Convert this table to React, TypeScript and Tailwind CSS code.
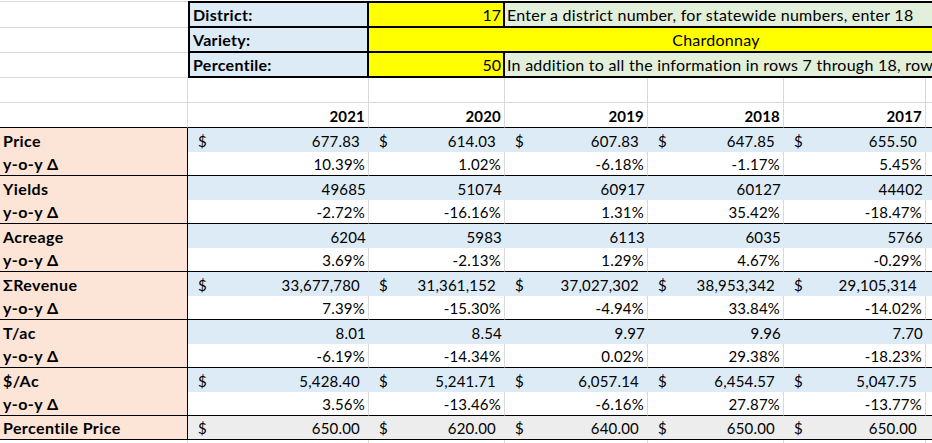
import React from "react";

const W = ["w-[181px]", "w-[136px]", "w-[143px]", "w-[136px]", "w-[142px]"];

const years = ["2021", "2020", "2019", "2018", "2017"];

type Row = { label: string; kind: "blue" | "white" | "gray"; cells: string[]; dollar?: boolean; end?: boolean };

const rows: Row[] = [
  { label: "Price", kind: "blue", dollar: true, cells: ["677.83", "614.03", "607.83", "647.85", "655.50"] },
  { label: "y-o-y Δ", kind: "white", end: true, cells: ["10.39%", "1.02%", "-6.18%", "-1.17%", "5.45%"] },
  { label: "Yields", kind: "blue", cells: ["49685", "51074", "60917", "60127", "44402"] },
  { label: "y-o-y Δ", kind: "white", end: true, cells: ["-2.72%", "-16.16%", "1.31%", "35.42%", "-18.47%"] },
  { label: "Acreage", kind: "blue", cells: ["6204", "5983", "6113", "6035", "5766"] },
  { label: "y-o-y Δ", kind: "white", end: true, cells: ["3.69%", "-2.13%", "1.29%", "4.67%", "-0.29%"] },
  { label: "ΣRevenue", kind: "blue", dollar: true, cells: ["33,677,780", "31,361,152", "37,027,302", "38,953,342", "29,105,314"] },
  { label: "y-o-y Δ", kind: "white", end: true, cells: ["7.39%", "-15.30%", "-4.94%", "33.84%", "-14.02%"] },
  { label: "T/ac", kind: "blue", cells: ["8.01", "8.54", "9.97", "9.96", "7.70"] },
  { label: "y-o-y Δ", kind: "white", end: true, cells: ["-6.19%", "-14.34%", "0.02%", "29.38%", "-18.23%"] },
  { label: "$/Ac", kind: "blue", dollar: true, cells: ["5,428.40", "5,241.71", "6,057.14", "6,454.57", "5,047.75"] },
  { label: "y-o-y Δ", kind: "white", end: true, cells: ["3.56%", "-13.46%", "-6.16%", "27.87%", "-13.77%"] },
  { label: "Percentile Price", kind: "gray", dollar: true, end: true, cells: ["650.00", "620.00", "640.00", "650.00", "650.00"] },
];

function DataRow({ r }: { r: Row }) {
  const fill =
    r.kind === "blue" ? "bg-[#DDEBF7]" : r.kind === "gray" ? "bg-[#EDEDED]" : "bg-white";
  const bottom = r.end ? "border-b border-b-black" : "";
  return (
    <div className="flex h-[24px]">
      <div className={`w-[188px] shrink-0 bg-[#FCE4D6] border-r border-r-black ${bottom} flex items-end pl-[3px] pb-[2px] font-bold text-[16px] tracking-[0.4px]`}>
        {r.label}
      </div>
      {r.cells.map((c, i) => (
        <div
          key={i}
          className={`${W[i]} shrink-0 ${fill} ${bottom} ${r.kind === "white" ? "border-r border-r-[#D9D9D9]" : ""} flex items-end justify-between pb-[2px]`}
        >
          {r.dollar ? (
            <>
              <span className="pl-[10px]">$</span>
              <span className="pr-[9px] tracking-[0.2px]">{c}</span>
            </>
          ) : (
            <>
              <span />
              <span className="pr-[3px] tracking-[0.2px]">{c}</span>
            </>
          )}
        </div>
      ))}
      <div className={`flex-1 ${fill} ${bottom}`} />
    </div>
  );
}

export default function App() {
  return (
    <div className="w-[932px] h-[443px] overflow-hidden bg-white text-black text-[15px] leading-[18px] font-['Lato','Noto_Sans',sans-serif]">
      <div className="h-px" />
      {/* Row 1 */}
      <div className="flex h-[27px]">
        <div className="w-[188px] shrink-0 border-t border-b border-[#D9D9D9]" />
        <div className="w-[181px] shrink-0 bg-[#DDEBF7] border-l-2 border-r-2 border-t-2 border-b-2 border-black flex items-end pl-[3px] pb-[2px] font-bold text-[16px] tracking-[0.3px]">
          District:
        </div>
        <div className="w-[136px] shrink-0 bg-[#FFFF00] border-r-2 border-t-2 border-b-2 border-black flex items-end justify-end pr-[2px] pb-[2px] text-[16px]">
          17
        </div>
        <div className="flex-1 min-w-0 bg-[#E2EFDA] border-t-2 border-b-2 border-black flex items-end pl-[2px] pb-[2px] whitespace-nowrap overflow-hidden text-[16px] tracking-[0.25px]">
          Enter a district number, for statewide numbers, enter 18
        </div>
      </div>
      {/* Row 2 */}
      <div className="flex h-[25px]">
        <div className="w-[188px] shrink-0 border-b border-[#D9D9D9]" />
        <div className="w-[181px] shrink-0 bg-[#DDEBF7] border-l-2 border-r-2 border-b-2 border-black flex items-end pl-[3px] pb-[2px] font-bold text-[16px] tracking-[0.3px]">
          Variety:
        </div>
        <div className="flex-1 min-w-0 bg-[#FFFF00] border-b-2 border-black flex items-end pb-[2px] overflow-hidden text-[16px] tracking-[0.25px]">
          <div className="w-[694px] shrink-0 text-center">Chardonnay</div>
        </div>
      </div>
      {/* Row 3 */}
      <div className="flex h-[25px]">
        <div className="w-[188px] shrink-0 border-b border-[#D9D9D9]" />
        <div className="w-[181px] shrink-0 bg-[#DDEBF7] border-l-2 border-r-2 border-b-2 border-black flex items-end pl-[3px] pb-[2px] font-bold text-[16px] tracking-[0.3px]">
          Percentile:
        </div>
        <div className="w-[136px] shrink-0 bg-[#FFFF00] border-r-2 border-b-2 border-black flex items-end justify-end pr-[2px] pb-[2px] text-[16px]">
          50
        </div>
        <div className="flex-1 min-w-0 bg-[#E2EFDA] border-b-2 border-black flex items-end pl-[2px] pb-[2px] whitespace-nowrap overflow-hidden text-[16px] tracking-[0.25px]">
          In addition to all the information in rows 7 through 18, rows
        </div>
      </div>
      {/* Row 4 (empty) */}
      <div className="flex h-[25px]">
        <div className="w-[188px] shrink-0 border-r border-b border-[#D9D9D9]" />
        {W.map((w, i) => (
          <div key={i} className={`${w} shrink-0 border-r border-b border-[#D9D9D9]`} />
        ))}
        <div className="flex-1 border-b border-[#D9D9D9]" />
      </div>
      {/* Row 5 years */}
      <div className="flex h-[25px]">
        <div className="w-[188px] shrink-0 border-r border-r-[#D9D9D9] border-b border-b-black" />
        {W.map((w, i) => (
          <div
            key={i}
            className={`${w} shrink-0 border-r border-r-[#D9D9D9] border-b border-b-black flex items-end justify-end pr-[3px] pb-[2px] font-bold tracking-[0.2px]`}
          >
            {years[i]}
          </div>
        ))}
        <div className="flex-1 border-b border-b-black" />
      </div>
      {rows.map((r, i) => (
        <DataRow key={i} r={r} />
      ))}
      {/* bottom sliver */}
      <div className="flex h-[10px]">
        <div className="w-[188px] shrink-0 border-r border-[#D9D9D9]" />
        {W.map((w, i) => (
          <div key={i} className={`${w} shrink-0 border-r border-[#D9D9D9]`} />
        ))}
        <div className="flex-1" />
      </div>
    </div>
  );
}
